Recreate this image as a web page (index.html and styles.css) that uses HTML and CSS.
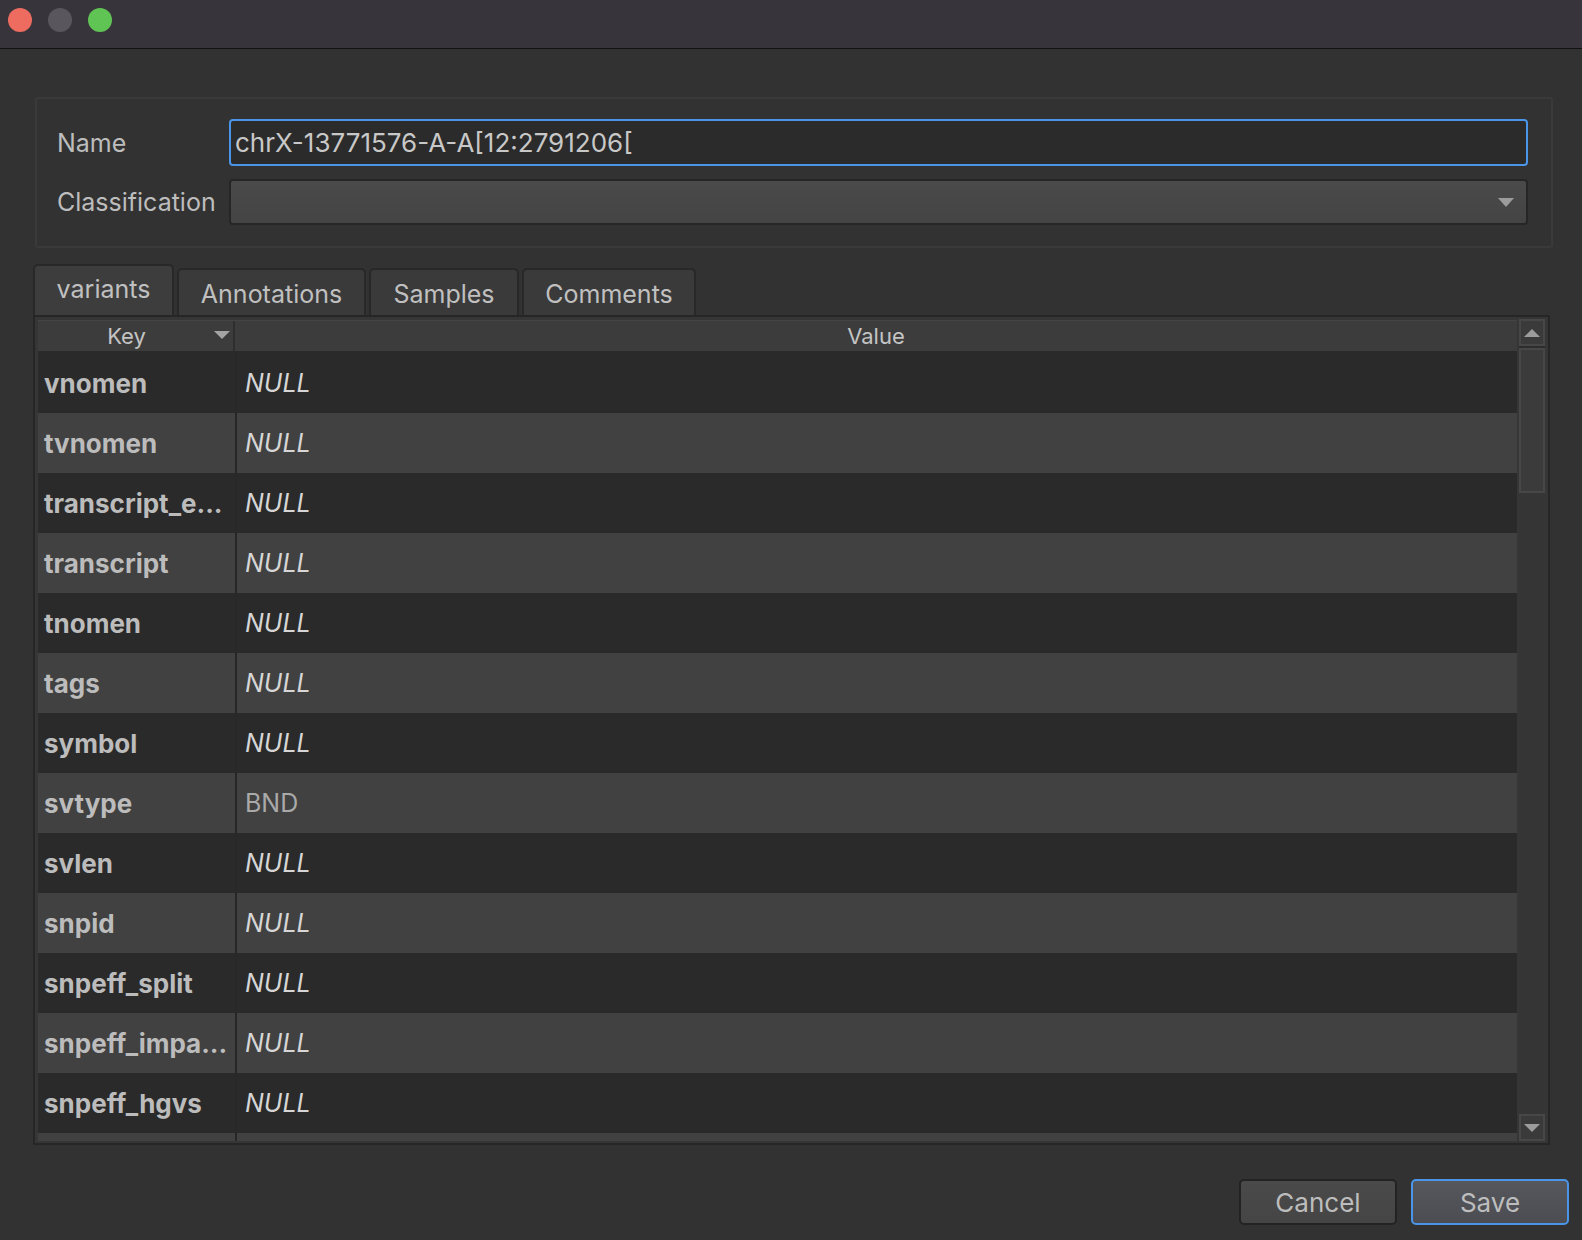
FILE: index.html
```html
<!DOCTYPE html>
<html>
<head>
<meta charset="utf-8">
<link rel="stylesheet" href="styles.css">
</head>
<body>
<div class="titlebar">
  <span class="light red"></span>
  <span class="light gray"></span>
  <span class="light green"></span>
</div>
<div class="main">
  <div class="group">
    <div class="form-row">
      <label class="label">Name</label>
      <div class="input">chrX-13771576-A-A[12:2791206[</div>
    </div>
    <div class="form-row">
      <label class="label">Classification</label>
      <div class="combo"><span class="combo-arrow"></span></div>
    </div>
  </div>
  <div class="tabs">
    <div class="tab active">variants</div>
    <div class="tab">Annotations</div>
    <div class="tab">Samples</div>
    <div class="tab">Comments</div>
  </div>
  <div class="pane">
    <div class="grid">
      <div class="header">
        <div class="hcell key">Key<span class="sort"></span></div>
        <div class="hcell value">Value</div>
      </div>
      <div class="row"><div class="kcell">vnomen</div><div class="vcell null">NULL</div></div>
      <div class="row alt"><div class="kcell">tvnomen</div><div class="vcell null">NULL</div></div>
      <div class="row"><div class="kcell">transcript_e...</div><div class="vcell null">NULL</div></div>
      <div class="row alt"><div class="kcell">transcript</div><div class="vcell null">NULL</div></div>
      <div class="row"><div class="kcell">tnomen</div><div class="vcell null">NULL</div></div>
      <div class="row alt"><div class="kcell">tags</div><div class="vcell null">NULL</div></div>
      <div class="row"><div class="kcell">symbol</div><div class="vcell null">NULL</div></div>
      <div class="row alt"><div class="kcell">svtype</div><div class="vcell">BND</div></div>
      <div class="row"><div class="kcell">svlen</div><div class="vcell null">NULL</div></div>
      <div class="row alt"><div class="kcell">snpid</div><div class="vcell null">NULL</div></div>
      <div class="row"><div class="kcell">snpeff_split</div><div class="vcell null">NULL</div></div>
      <div class="row alt"><div class="kcell">snpeff_impa...</div><div class="vcell null">NULL</div></div>
      <div class="row"><div class="kcell">snpeff_hgvs</div><div class="vcell null">NULL</div></div>
      <div class="row alt"><div class="kcell"></div><div class="vcell"></div></div>
    </div>
    <div class="scrollbar">
      <div class="sbtn"><span class="up"></span></div>
      <div class="thumb"></div>
      <div class="track"></div>
      <div class="sbtn"><span class="down"></span></div>
    </div>
  </div>
</div>
<div class="footer">
  <div class="btn">Cancel</div>
  <div class="btn default">Save</div>
</div>
</body>
</html>
```

FILE: styles.css
```css
html, body {
  margin: 0;
  padding: 0;
}
body {
  width: 1582px;
  height: 1240px;
  overflow: hidden;
  background: #323232;
  font-family: Inter, "Noto Sans", "Liberation Sans", sans-serif;
  color: #bdbdbd;
}
.titlebar {
  box-sizing: border-box;
  background: #37353b;
  border-bottom: 1px solid #121212;
  display: flex;
  align-items: flex-start;
  gap: 16px;
  padding: 8px 0 0 8px;
  height: 49px;
}
.light {
  width: 24px;
  height: 24px;
  border-radius: 50%;
  display: block;
}
.red { background: #ee6b5f; }
.gray { background: #59575d; }
.green { background: #5fc454; }

.main {
  padding: 48px 32px 0 33px;
}
.group {
  margin: 0 -3px 0 2px;
  height: 151px;
  box-sizing: border-box;
  border: 2px solid #3a3a3a;
  border-radius: 3px;
  padding: 20px 23px 0 20px;
  display: flex;
  flex-direction: column;
  gap: 13px;
}
.form-row {
  display: flex;
  align-items: center;
}
.label {
  width: 172px;
  font-size: 25px;
  color: #bdbdbd;
}
.input {
  flex: 1;
  height: 47px;
  box-sizing: border-box;
  background: #2b2b2b;
  border: 2px solid #4a95e8;
  border-radius: 4px;
  font-size: 26px;
  color: #c8c8c8;
  padding: 0 0 0 4px;
  display: flex;
  align-items: center;
}
.combo {
  flex: 1;
  height: 46px;
  box-sizing: border-box;
  background: linear-gradient(#4a4a4a, #444444);
  border: 2px solid #262626;
  border-radius: 4px;
  display: flex;
  align-items: center;
  justify-content: flex-end;
  padding-right: 12px;
}
.combo-arrow {
  width: 0;
  height: 0;
  border-left: 8px solid transparent;
  border-right: 8px solid transparent;
  border-top: 9px solid #9c9c9c;
}

.tabs {
  margin-top: 16px;
  display: flex;
  align-items: flex-end;
  gap: 3px;
  height: 51px;
}
.tab {
  height: 47px;
  box-sizing: border-box;
  background: #3a3a3a;
  border: 2px solid #282828;
  border-bottom: none;
  border-radius: 5px 5px 0 0;
  font-size: 25px;
  color: #c0c0c0;
  display: flex;
  align-items: center;
  justify-content: center;
  padding: 2px 0 0;
}
.tab:nth-child(2) { width: 189px; }
.tab:nth-child(3) { width: 150px; }
.tab:nth-child(4) { width: 174px; }
.tab.active {
  width: 141px;
  height: 51px;
  background: #3d3d3d;
  padding: 0 0 4px;
}

.pane {
  height: 830px;
  box-sizing: border-box;
  background: #363636;
  border: 2px solid #262626;
  padding: 3px 3px 2px 3px;
  display: flex;
  gap: 2px;
  overflow: hidden;
}
.grid {
  flex: 1;
  overflow: hidden;
  background: #2a2a2a;
}
.header {
  display: flex;
  height: 33px;
  box-sizing: border-box;
  background: #3c3c3c;
  border-bottom: 2px solid #2a2a2a;
  border-top: 1px solid #444;
}
.hcell {
  font-size: 22px;
  color: #c4c4c4;
  display: flex;
  align-items: center;
  justify-content: center;
}
.hcell.key {
  width: 197px;
  box-sizing: border-box;
  padding-right: 18px;
  border-right: 2px solid #2e2e2e;
  position: relative;
}
.sort {
  position: absolute;
  right: 3px;
  top: 10px;
  width: 0;
  height: 0;
  border-left: 8px solid transparent;
  border-right: 8px solid transparent;
  border-top: 8px solid #a4a4a4;
}
.hcell.value {
  flex: 1;
}
.row {
  display: flex;
  height: 60px;
  background: #2a2a2a;
}
.row.alt {
  background: #414141;
}
.kcell {
  width: 199px;
  box-sizing: border-box;
  border-right: 2px solid #272727;
  padding-left: 6px;
  font-size: 26px;
  font-weight: 700;
  color: #bcbcbc;
  display: flex;
  align-items: center;
  white-space: nowrap;
  overflow: hidden;
}
.row:not(.alt) .kcell {
  border-right-color: #282828;
}
.vcell {
  flex: 1;
  padding-left: 8px;
  font-size: 25px;
  color: #a9a9a9;
  display: flex;
  align-items: center;
}
.vcell.null {
  font-style: italic;
  color: #d6d6d6;
}

.scrollbar {
  width: 26px;
  display: flex;
  flex-direction: column;
  background: #2d2d2d;
  margin-top: -1px;
}
.sbtn {
  height: 27px;
  box-sizing: border-box;
  border: 2px solid #474747;
  background: #3a3a3a;
  display: flex;
  align-items: center;
  justify-content: center;
}
.up {
  width: 0;
  height: 0;
  border-left: 8px solid transparent;
  border-right: 8px solid transparent;
  border-bottom: 8px solid #9c9c9c;
}
.down {
  width: 0;
  height: 0;
  border-left: 8px solid transparent;
  border-right: 8px solid transparent;
  border-top: 8px solid #9c9c9c;
}
.thumb {
  margin-top: 2px;
  height: 145px;
  box-sizing: border-box;
  border: 2px solid #474747;
  background: #3b3b3b;
}
.track {
  flex: 1;
  background: #353535;
}

.footer {
  display: flex;
  justify-content: flex-end;
  gap: 14px;
  padding: 34px 13px 0 0;
}
.btn {
  width: 158px;
  height: 46px;
  box-sizing: border-box;
  border: 2px solid #232323;
  border-radius: 5px;
  background: linear-gradient(#4a4a4a, #454545);
  font-size: 26px;
  color: #bdbdbd;
  display: flex;
  align-items: center;
  justify-content: center;
}
.btn.default {
  border-color: #4a95e8;
  background: linear-gradient(#55575d, #4b4d53);
}
```
